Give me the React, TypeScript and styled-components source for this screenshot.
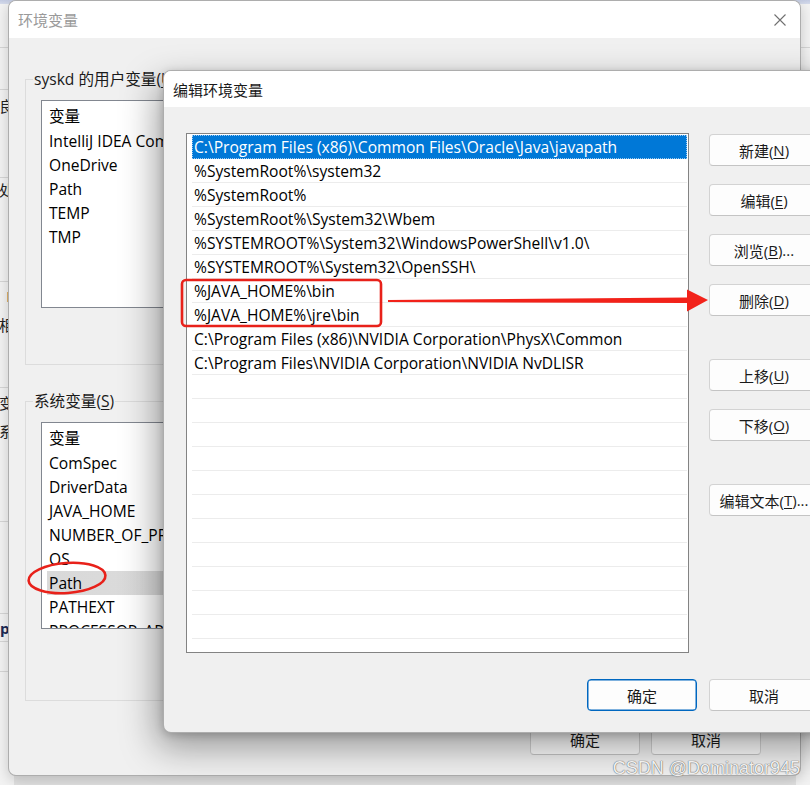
import React from 'react';
import styled, { createGlobalStyle } from 'styled-components';

const Global = createGlobalStyle`
  html, body { margin: 0; padding: 0; }
  body {
    width: 810px; height: 785px; overflow: hidden;
    font-family: "Open Sans", "Noto Sans CJK SC", sans-serif;
    font-size: 15.6px; color: #000;
  }
  * { box-sizing: border-box; }
`;

const Desktop = styled.div`
  position: relative;
  width: 810px;
  height: 785px;
  overflow: hidden;
  background: linear-gradient(to bottom, #c3cbe2 0, #d6dcec 4px, #e2e2e2 4px, #e2e2e2 100%);
`;

const BackPane = styled.div<{ $left: number; $width: number }>`
  position: absolute;
  left: ${p => p.$left}px;
  top: 4px;
  width: ${p => p.$width}px;
  height: 781px;
  background: #f3f3f3;
  display: flex;
  flex-direction: column;
  overflow: hidden;
`;

const BackRow = styled.div<{ $h: number; $line?: boolean; $bold?: boolean }>`
  height: ${p => p.$h}px;
  flex: none;
  display: flex;
  align-items: center;
  justify-content: flex-end;
  white-space: nowrap;
  font-size: 15px;
  font-weight: ${p => (p.$bold ? 700 : 400)};
  color: ${p => (p.$bold ? '#1b2a55' : '#222')};
  border-bottom: ${p => (p.$line ? '1px solid #d6d6d6' : 'none')};
`;

const Win = styled.div<{ $left: number; $top: number; $w: number; $h: number; $shadow?: boolean }>`
  position: absolute;
  left: ${p => p.$left}px;
  top: ${p => p.$top}px;
  width: ${p => p.$w}px;
  height: ${p => p.$h}px;
  display: flex;
  flex-direction: column;
  background: #f0f0f0;
  border: 1px solid rgba(0, 0, 0, 0.28);
  border-radius: 8px;
  overflow: hidden;
  box-shadow: ${p =>
    p.$shadow
      ? '-6px 14px 36px rgba(0,0,0,0.38), 0 2px 8px rgba(0,0,0,0.18)'
      : '0 4px 14px rgba(0,0,0,0.18)'};
`;

const TitleBar = styled.div<{ $h: number }>`
  flex: none;
  height: ${p => p.$h}px;
  background: #fff;
  display: flex;
  align-items: center;
  justify-content: space-between;
  padding: 0 14px 0 9px;
`;

const Title = styled.div<{ $inactive?: boolean }>`
  font-size: 15px;
  color: ${p => (p.$inactive ? '#9a9a9a' : '#1a1a1a')};
  font-family: "Noto Sans CJK SC", sans-serif;
`;

const CloseIcon = styled.svg`
  width: 12px;
  height: 12px;
  flex: none;
`;

const OuterBody = styled.div`
  flex: 1;
  display: flex;
  flex-direction: column;
  padding: 31px 16px 18px 16px;
`;

const Group = styled.fieldset<{ $gapTop?: number; $padBottom: number }>`
  margin: ${p => p.$gapTop ?? 0}px 0 0 0;
  padding: 0 0 ${p => p.$padBottom}px 7px;
  border: 1px solid #dcdcdc;
  min-width: 0;
`;

const Legend = styled.legend`
  padding: 0 1px;
  font-size: 15.6px;
  line-height: 20px;
  color: #1a1a1a;
  white-space: nowrap;
`;

const VarList = styled.div<{ $h: number }>`
  margin: 11px 8px 0 8px;
  height: ${p => p.$h}px;
  border: 1px solid #828790;
  background: #fff;
  padding: 0 0 0 5px;
  overflow: hidden;
  display: flex;
  flex-direction: column;
`;

const VarHeader = styled.div`
  height: 28px;
  flex: none;
  display: flex;
  align-items: center;
  padding-left: 2px;
  font-family: "Noto Sans CJK SC", sans-serif;
`;

const VarItem = styled.div<{ $hot?: boolean }>`
  height: 24px;
  flex: none;
  display: flex;
  align-items: center;
  padding-left: 2px;
  white-space: nowrap;
  background: ${p => (p.$hot ? 'linear-gradient(to right, #d9d9d9, #e6e6e6)' : 'transparent')};
`;

const Underline = styled.span`
  text-decoration: underline;
  text-underline-offset: 2px;
`;

const ButtonRow = styled.div<{ $padRight: number }>`
  display: flex;
  justify-content: flex-end;
  gap: 11px;
  padding-right: ${p => p.$padRight}px;
`;

const OuterButtonRow = styled(ButtonRow)`
  margin-top: 22px;
`;

const Button = styled.button<{ $primary?: boolean; $gap?: number }>`
  width: 110px;
  height: 32px;
  flex: none;
  margin-top: ${p => p.$gap ?? 0}px;
  background: #fdfdfd;
  border: 1px solid ${p => (p.$primary ? '#0067c0' : '#d3d3d3')};
  border-bottom-color: ${p => (p.$primary ? '#0067c0' : '#c4c4c4')};
  box-shadow: ${p => (p.$primary ? 'inset 0 0 0 0.5px #0067c0' : 'none')};
  border-radius: 4px;
  font: inherit;
  font-size: 15px;
  color: #1a1a1a;
  padding: 0;
  display: flex;
  align-items: center;
  justify-content: center;
  white-space: nowrap;
`;

const InnerBody = styled.div`
  flex: 1;
  display: grid;
  grid-template-columns: 503px 110px;
  grid-template-rows: 520px 32px;
  column-gap: 20px;
  row-gap: 26px;
  padding: 26px 22px 21px 22px;
`;

const PathList = styled.div`
  border: 1px solid #838383;
  background: #fff;
  padding: 1px 1px 0 5px;
  overflow: hidden;
  display: flex;
  flex-direction: column;
`;

const PathRow = styled.div<{ $selected?: boolean }>`
  height: 24px;
  flex: none;
  display: flex;
  align-items: center;
  padding-left: 2px;
  white-space: nowrap;
  border-bottom: 1px solid ${p => (p.$selected ? '#0078d7' : '#ececec')};
  background: ${p => (p.$selected ? '#0078d7' : '#fff')};
  color: ${p => (p.$selected ? '#fff' : '#000')};
  outline: ${p => (p.$selected ? '1px dotted #9ccaf0' : 'none')};
  outline-offset: -1px;
`;

const SideButtons = styled.div`
  display: flex;
  flex-direction: column;
  padding-top: 1px;
`;

const Footer = styled(ButtonRow)`
  grid-column: 1 / span 2;
  gap: 12px;
`;

const Overlay = styled.svg`
  position: absolute;
  left: 0;
  top: 0;
  width: 810px;
  height: 785px;
  pointer-events: none;
`;

const Watermark = styled.div`
  position: absolute;
  right: 10px;
  bottom: 6px;
  font-family: "Liberation Sans", Arial, sans-serif;
  font-size: 18px;
  color: rgba(255, 255, 255, 0.92);
  text-shadow: 0 0 1px #555, 0 0 1px #777;
`;

const paths = [
  'C:\\Program Files (x86)\\Common Files\\Oracle\\Java\\javapath',
  '%SystemRoot%\\system32',
  '%SystemRoot%',
  '%SystemRoot%\\System32\\Wbem',
  '%SYSTEMROOT%\\System32\\WindowsPowerShell\\v1.0\\',
  '%SYSTEMROOT%\\System32\\OpenSSH\\',
  '%JAVA_HOME%\\bin',
  '%JAVA_HOME%\\jre\\bin',
  'C:\\Program Files (x86)\\NVIDIA Corporation\\PhysX\\Common',
  'C:\\Program Files\\NVIDIA Corporation\\NVIDIA NvDLISR',
];

const userVars = ['IntelliJ IDEA Community Edition', 'OneDrive', 'Path', 'TEMP', 'TMP'];
const sysVars = ['ComSpec', 'DriverData', 'JAVA_HOME', 'NUMBER_OF_PROCESSORS', 'OS', 'Path', 'PATHEXT', 'PROCESSOR_ARCHITECTURE'];

const backRows: { h: number; t?: string; line?: boolean; bold?: boolean }[] = [
  { h: 44, line: true },
  { h: 42, line: true },
  { h: 30, t: '良' },
  { h: 58, line: true },
  { h: 22, t: '处' },
  { h: 82, line: true },
  { h: 28, t: 'F' },
  { h: 28, t: '相' },
  { h: 50, line: true },
  { h: 28, t: '变' },
  { h: 28, t: '系' },
  { h: 78, line: true },
  { h: 92, line: true },
  { h: 28, t: 'pl', bold: true, line: true },
  { h: 30, line: true },
];

export default function App() {
  const emptyRows = Array.from({ length: 12 });
  return (
    <>
      <Global />
      <Desktop>
        <BackPane $left={0} $width={14}>
          {backRows.map((r, i) => (
            <BackRow key={i} $h={r.h} $line={r.line} $bold={r.bold}>
              {r.t ?? ''}
            </BackRow>
          ))}
        </BackPane>
        <BackPane $left={796} $width={14}>
          <BackRow $h={44} $line />
          <BackRow $h={700} />
        </BackPane>

        <Win $left={8} $top={0} $w={793} $h={776}>
          <TitleBar $h={37}>
            <Title $inactive>环境变量</Title>
            <CloseIcon viewBox="0 0 12 12">
              <path d="M0.5 0.5 L11.5 11.5 M11.5 0.5 L0.5 11.5" stroke="#707070" strokeWidth="1.1" fill="none" />
            </CloseIcon>
          </TitleBar>
          <OuterBody>
            <Group $padBottom={56}>
              <Legend>
                syskd 的用户变量(<Underline>U</Underline>)
              </Legend>
              <VarList $h={208}>
                <VarHeader>变量</VarHeader>
                {userVars.map(v => (
                  <VarItem key={v}>{v}</VarItem>
                ))}
              </VarList>
            </Group>
            <Group $gapTop={26} $padBottom={71}>
              <Legend>
                系统变量(<Underline>S</Underline>)
              </Legend>
              <VarList $h={207}>
                <VarHeader>变量</VarHeader>
                {sysVars.map((v, i) => (
                  <VarItem key={i} $hot={i === 5}>
                    {v}
                  </VarItem>
                ))}
              </VarList>
            </Group>
            <OuterButtonRow $padRight={23}>
              <Button>确定</Button>
              <Button>取消</Button>
            </OuterButtonRow>
          </OuterBody>
        </Win>

        <Win $left={163} $top={70} $w={678} $h={663} $shadow>
          <TitleBar $h={36}>
            <Title>编辑环境变量</Title>
          </TitleBar>
          <InnerBody>
            <PathList>
              {paths.map((p, i) => (
                <PathRow key={i} $selected={i === 0}>
                  {p}
                </PathRow>
              ))}
              {emptyRows.map((_, i) => (
                <PathRow key={'e' + i} />
              ))}
            </PathList>
            <SideButtons>
              <Button>
                新建(<Underline>N</Underline>)
              </Button>
              <Button $gap={18}>
                编辑(<Underline>E</Underline>)
              </Button>
              <Button $gap={18}>
                浏览(<Underline>B</Underline>)...
              </Button>
              <Button $gap={18}>
                删除(<Underline>D</Underline>)
              </Button>
              <Button $gap={43}>
                上移(<Underline>U</Underline>)
              </Button>
              <Button $gap={18}>
                下移(<Underline>O</Underline>)
              </Button>
              <Button $gap={43}>
                编辑文本(<Underline>T</Underline>)...
              </Button>
            </SideButtons>
            <Footer $padRight={0}>
              <Button $primary>确定</Button>
              <Button>取消</Button>
            </Footer>
          </InnerBody>
        </Win>

        <Overlay viewBox="0 0 810 785">
          <rect x="182" y="280" width="199" height="46" rx="4" fill="none" stroke="#e8211a" strokeWidth="2.6" />
          <polygon
            points="388,300 687,297.5 687,289.5 708,300 687,311.5 687,303 388,302"
            fill="#f2221a"
          />
          <ellipse cx="67" cy="578" rx="38.5" ry="15" transform="rotate(-4 67 578)" fill="none" stroke="#e8211a" strokeWidth="2.6" />
        </Overlay>

        <Watermark>CSDN @Dominator945</Watermark>
      </Desktop>
    </>
  );
}
